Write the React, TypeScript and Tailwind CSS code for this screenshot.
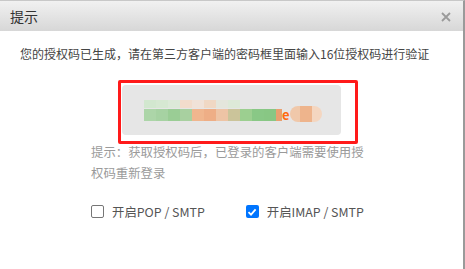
import React from "react";

const font = { fontFamily: '"Noto Sans CJK SC", "Noto Sans", sans-serif' };

const topRow = ["#d2e7cf", "#d6e8d2", "#dce9d8", "#f2dccc", "#f0e2d8", "#f0d8c4", "#e4e6dc", "#dde9d8"];
const mainRow = [
  "#acd5a8",
  "#a6d2a2",
  "#9acd95",
  "#a8d0a0",
  "#f0b68e",
  "#eeae86",
  "#eec4a5",
  "#cbc49a",
  "#9ccf90",
  "#89c886",
  "#88c784",
];

export default function App() {
  return (
    <div
      className="relative w-[465px] h-[269px] bg-white border-t border-t-[#c8c8c8] border-r-2 border-r-[#9a9a9a] overflow-hidden"
      style={font}
    >
      <div className="h-[30px] bg-gradient-to-b from-[#f1f1f1] to-[#d7d7d7] flex items-center justify-between pl-[10px] pr-[12px]">
        <span className="text-[14px] text-[#333] leading-none">提示</span>
        <svg width="10" height="10" viewBox="0 0 10 10" className="mt-[1px]">
          <path d="M1 1 L9 9 M9 1 L1 9" stroke="#9a9a9a" strokeWidth="1.8" />
        </svg>
      </div>

      <div className="mt-[13px] pl-[20px] text-[12px] leading-[20px] text-[#444] whitespace-nowrap">
        您的授权码已生成，请在第三方客户端的密码框里面输入16位授权码进行验证
      </div>

      <div className="ml-[122px] mt-[21px] w-[219px] h-[50px] rounded-[4px] bg-[#e6e6e6] relative">
        <div className="absolute left-[22px] top-[15px] flex">
          {topRow.map((c, i) => (
            <div key={i} className="w-[12px] h-[8px]" style={{ backgroundColor: c }} />
          ))}
        </div>
        <div className="absolute left-[22px] top-[23px] flex items-center">
          {mainRow.map((c, i) => (
            <div key={i} className="w-[12px] h-[12px]" style={{ backgroundColor: c }} />
          ))}
          <div className="w-[6px] h-[12px] bg-[#eaa070]" />
          <span className="text-[13px] leading-[12px] font-bold text-[#ff6a10] -mt-[1px]">e</span>
          <div className="flex rounded-[8px] overflow-hidden -mt-[2px]">
            <div className="w-[10px] h-[16px] bg-[#f0c8aa]" />
            <div className="w-[12px] h-[16px] bg-[#eeb48c]" />
            <div className="w-[10px] h-[16px] bg-[#f4d6c0]" />
          </div>
        </div>
      </div>

      <div className="ml-[91px] mt-[7px] w-[282px] text-[12.4px] leading-[21px] text-[#9a9a9a]">
        提示：获取授权码后，已登录的客户端需要使用授权码重新登录
      </div>

      <div className="mt-[18px] ml-[91px] flex items-center h-[20px] text-[12.4px] text-[#555]">
        <label className="flex items-center">
          <span className="w-[13px] h-[13px] rounded-[2px] border border-[#767676] bg-white" />
          <span className="ml-[8px]">开启POP / SMTP</span>
        </label>
        <label className="flex items-center ml-[41px]">
          <span className="w-[13px] h-[13px] rounded-[2px] bg-[#0075ff] flex items-center justify-center">
            <svg width="10" height="10" viewBox="0 0 10 10">
              <path d="M1.5 5.2 L4 7.6 L8.6 2.4" stroke="white" strokeWidth="1.8" fill="none" />
            </svg>
          </span>
          <span className="ml-[8px]">开启IMAP / SMTP</span>
        </label>
      </div>

      <div className="absolute left-[118px] top-[79px] w-[240px] h-[64px] border-[3px] border-[#ff1a1a] rounded-[2px] pointer-events-none" />
    </div>
  );
}
